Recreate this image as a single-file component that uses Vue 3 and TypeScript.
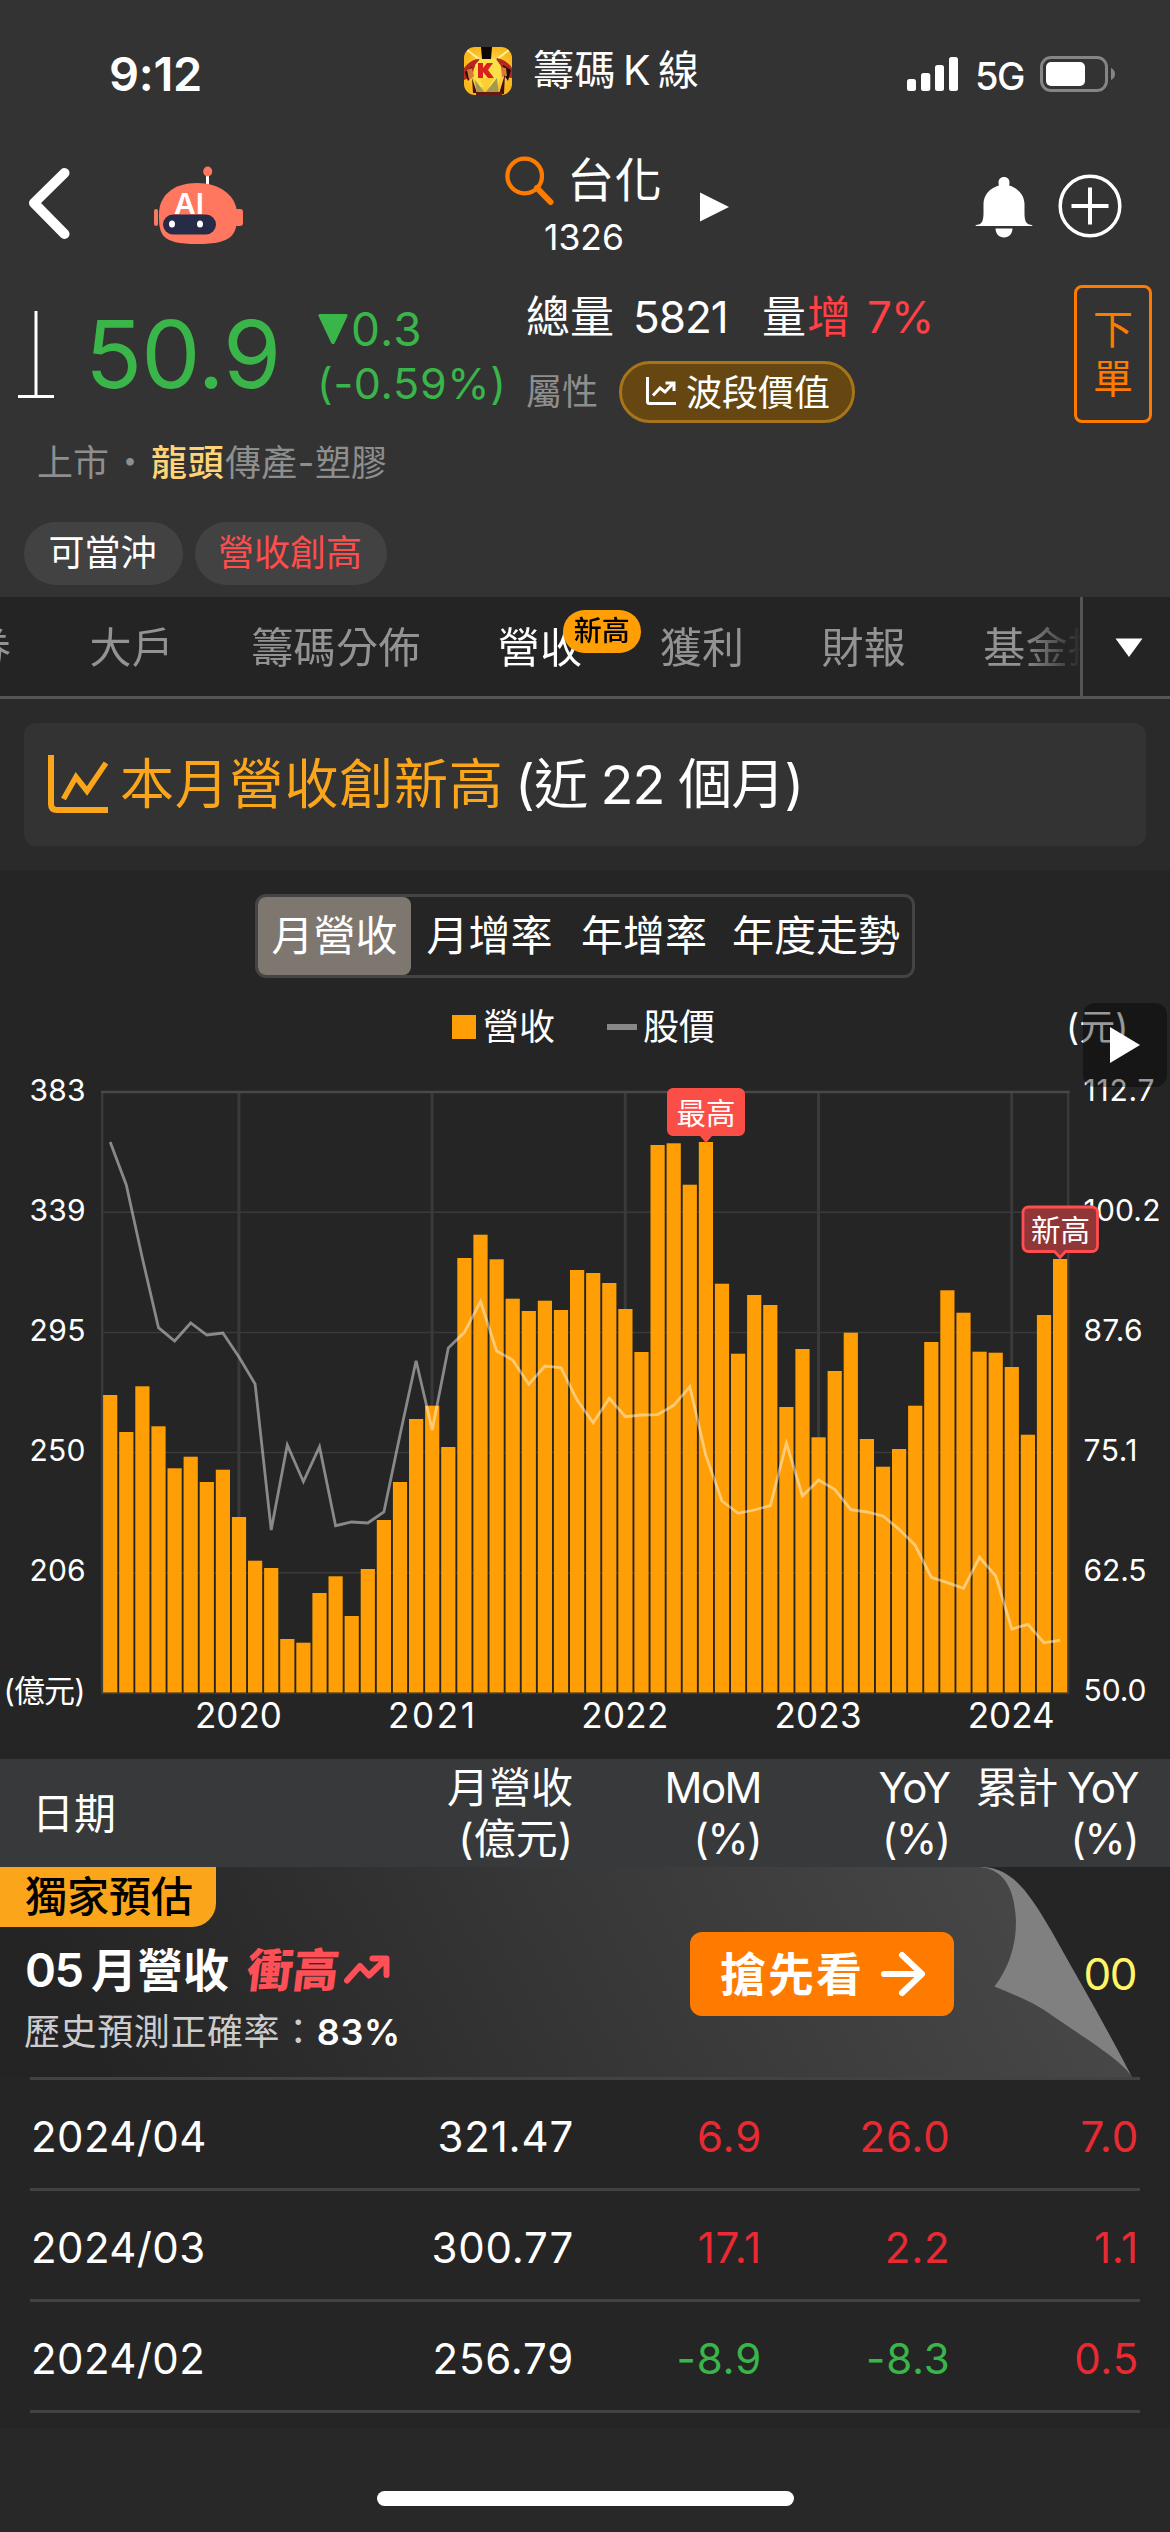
<script setup lang="ts">
interface Tab { label: string; active?: boolean; badge?: string }
interface Row { date: string; revenue: string; mom: string; yoy: string; total: string }

const tabs: Tab[] = [
  { label: '大戶' },
  { label: '籌碼分佈' },
  { label: '營收', active: true, badge: '新高' },
  { label: '獲利' },
  { label: '財報' },
  { label: '基金持股' },
]

const modes = ['月營收', '月增率', '年增率', '年度走勢']

const rows: Row[] = [
  { date: '2024/04', revenue: '321.47', mom: '6.9', yoy: '26.0', total: '7.0' },
  { date: '2024/03', revenue: '300.77', mom: '17.1', yoy: '2.2', total: '1.1' },
  { date: '2024/02', revenue: '256.79', mom: '-8.9', yoy: '-8.3', total: '0.5' },
]

const tone = (v: string): string => (v.startsWith('-') ? 'down' : 'up')

// Chart geometry: bar tops and price points share one vertical scale
const top = 1092
const originY = 1060
const left = 102.2
const pitch = 16.1
const baseline = 1693

const barTops: number[] = [
  1395, 1432, 1386.3, 1426.3, 1468.3, 1456.7, 1482, 1469.7, 1517, 1560.7,
  1568, 1639, 1642.7, 1593, 1576.3, 1616, 1569, 1520, 1482, 1419,
  1405.7, 1447, 1258, 1234.7, 1259.3, 1298.7, 1311, 1300.7, 1310, 1270,
  1273, 1283, 1309, 1352, 1145, 1143.3, 1184.7, 1142, 1283.7, 1353.7,
  1295, 1305, 1407, 1349, 1437.3, 1371, 1332.7, 1439, 1466.7, 1449,
  1405.7, 1342, 1290.3, 1312.7, 1351.7, 1352.7, 1367, 1434.7, 1315, 1259,
]

const prices: number[] = [
  1142, 1185, 1258.3, 1327.7, 1341, 1323, 1335, 1333, 1357, 1384,
  1530, 1445, 1481.7, 1446.7, 1525.7, 1522, 1523, 1512, 1435, 1360.7,
  1430, 1348, 1332.3, 1301.3, 1351, 1360, 1384.3, 1366, 1367.7, 1400,
  1422.7, 1398.3, 1416.7, 1415, 1414.7, 1405.3, 1386.7, 1455.7, 1501, 1513.3,
  1510, 1505.7, 1443.3, 1496, 1480, 1489.3, 1509.7, 1512, 1516, 1529.3,
  1545.3, 1577.3, 1582.7, 1588.3, 1557.3, 1576, 1629, 1624.3, 1642.7, 1640.3,
]

const centerX = (i: number): number => left + 8 + pitch * i
const bars = barTops.map((y, i) => ({ x: centerX(i) - 7.1, y: y - originY, h: baseline - y }))
const line = prices.map((y, i) => `${centerX(i).toFixed(1)},${(y - originY).toFixed(1)}`).join(' ')

const grid = [1, 2, 3, 4].map((n) => top - originY + n * 120.2)
const years = ['2020', '2021', '2022', '2023', '2024'].map((label, i) => ({ label, x: 238.9 + i * 193.2 }))
const leftAxis = ['383', '339', '295', '250', '206'].map((label, i) => ({ label, y: 40.5 + i * 120.1 }))
const rightAxis = [
  { label: '112.7', w: 71 }, { label: '100.2', w: 77 }, { label: '87.6', w: 59 },
  { label: '75.1', w: 54 }, { label: '62.5', w: 63 }, { label: '50.0', w: 63 },
].map((a, i) => ({ ...a, y: 40.5 + i * 120.1 }))
</script>

<template>
  <div class="screen">
    <header class="top">
      <div class="status">
        <span class="clock">9:12</span>
        <svg class="app-icon" width="48" height="48" viewBox="0 0 48 48">
          <defs>
            <clipPath id="appClip"><rect width="48" height="48" rx="11" /></clipPath>
            <radialGradient id="glow"><stop offset="0" stop-color="#fff26a" /><stop offset="1" stop-color="#fbb81c" /></radialGradient>
          </defs>
          <g clip-path="url(#appClip)">
            <rect width="48" height="48" fill="url(#glow)" />
            <path d="M3 3l12 9M45 3l-12 9M24 0v10" stroke="#fff3a0" stroke-width="2" />
            <path d="M0 21c4-5 9-9 15-9l2 3-7 6-2 9-8 3zM48 21c-3-5-9-9-15-10l-2 4 7 6 2 9 8 1z" fill="#b3271d" />
            <path d="M1 25l7-5 1 8-5 6zM47 23l-8-5 1 10 4 6z" fill="#1b0b07" />
            <path d="M3 23l5-2 2 8-5 4zM37 20l5 1 1 8-5 1z" fill="#d97a35" />
            <path d="M16 12h16l5 7-1 13-3 8H15l-5-9 1-13z" fill="#fbe04a" />
            <path d="M17 0h11l-1 12h-9z" fill="#0c0907" />
            <path d="M8 31l5 15h-4zM41 27l-6 20h5z" fill="#3b1020" />
            <path d="M11 33l10 13 12-15 2 17H13z" fill="#a39a4f" />
            <path d="M15 31l7 13 8-13z" fill="#fbce35" />
            <path d="M12 45h26v3H12z" fill="#641a14" />
            <path d="M14 31V16h5v5l4-5h6l-5 7 6 8h-6l-5-6v6z" fill="#d9221e" />
          </g>
        </svg>
        <span class="app-name">籌碼<i>K</i>線</span>
        <svg class="signal" width="52" height="34" viewBox="0 0 52 34">
          <g fill="#fff">
            <rect y="22" width="9" height="12" rx="2.5" />
            <rect x="14" y="16" width="9.3" height="18" rx="2.5" />
            <rect x="28" y="8" width="9" height="26" rx="2.5" />
            <rect x="42" width="9" height="34" rx="2.5" />
          </g>
        </svg>
        <span class="net">5G</span>
        <svg class="battery" width="76" height="36" viewBox="0 0 76 36">
          <rect x="1.5" y="1.5" width="65" height="33" rx="9.5" fill="none" stroke="#858585" stroke-width="3" />
          <rect x="6" y="6" width="39" height="24" rx="5" fill="#fff" />
          <path d="M71 12c2.600 1 4 3.400 4 6s-1.400 5-4 6z" fill="#858585" />
        </svg>
      </div>

      <div class="nav">
        <svg class="back" width="46" height="76" viewBox="0 0 46 76">
          <path d="M36.500 8L6 38l30.500 31" fill="none" stroke="#fff" stroke-width="10" stroke-linecap="round" stroke-linejoin="round" />
        </svg>
        <svg class="robot" width="90" height="80" viewBox="0 0 90 80">
          <rect x="52" y="8" width="3" height="12" fill="#fff" />
          <ellipse cx="53.700" cy="5.500" rx="4.500" ry="5" fill="#ff775e" />
          <rect x="0" y="43" width="4" height="17" rx="2" fill="#ff775e" />
          <rect x="80" y="43" width="9" height="17" rx="3" fill="#ff775e" />
          <path d="M5 48c0-19 15-31 38-31s40 13 40 31c0 20-3 30-40 30S5 68 5 48z" fill="#ff775e" />
          <rect x="9" y="48.500" width="53" height="20" rx="10" fill="#262c48" />
          <ellipse cx="18" cy="58" rx="3" ry="3.600" fill="#fff" />
          <ellipse cx="46" cy="58" rx="3" ry="3.600" fill="#fff" />
          <text x="20" y="47.500" textLength="30" lengthAdjust="spacingAndGlyphs" class="ai">AI</text>
        </svg>
        <div class="stock">
          <div class="stock-name">
            <svg width="50" height="50" viewBox="0 0 50 50">
              <circle cx="19.700" cy="20" r="17.300" fill="none" stroke="#ff7b00" stroke-width="4.300" />
              <path d="M32 32l13.500 14" stroke="#ff7b00" stroke-width="6" stroke-linecap="round" />
            </svg>
            <span>台化</span>
          </div>
          <div class="stock-code">1326</div>
        </div>
        <svg class="next" width="30" height="30" viewBox="0 0 30 30"><path d="M0 0.500l29 14.500L0 29.500z" fill="#fff" /></svg>
        <svg class="bell" width="58" height="62" viewBox="0 0 58 62">
          <path d="M29 0c3.600 0 5.500 2.400 5.500 5.500l-.3 3C43 11 49.500 18 49.500 27v9c0 6 1 9.500 3.500 11 1.600 1 4.500.6 4.500 2H.5c0-1.400 2.900-1 4.500-2 2.500-1.500 3.500-5 3.500-11v-9c0-9 6.500-16 15.300-18.500l-.3-3C23.500 2.400 25.400 0 29 0zM20.500 51.500h17c0 5-3.500 9-8.500 9s-8.500-4-8.500-9z" fill="#fff" />
        </svg>
        <svg class="add" width="64" height="64" viewBox="0 0 64 64">
          <circle cx="32" cy="32" r="29.800" fill="none" stroke="#fff" stroke-width="3.500" />
          <path d="M13.500 32h37M32 13.500v37" stroke="#fff" stroke-width="4" />
        </svg>
      </div>

      <div class="quote">
        <svg class="candle" width="36" height="88" viewBox="0 0 36 88">
          <path d="M18 0v85M0 85.500h36" stroke="#fff" stroke-width="3" />
        </svg>
        <span class="price">50.9</span>
        <div class="change">
          <div class="delta">
            <svg width="30" height="32" viewBox="0 0 30 32"><path d="M2 1h26c1.500 0 1.800 1.200 1.400 2.200L17 29.500c-.8 2-3.200 2-4 0L.6 3.200C.2 2.200.5 1 2 1z" fill="#3ab54a" /></svg>
            <span>0.3</span>
          </div>
          <div class="percent">(-0.59%)</div>
        </div>
        <div class="meta">
          <div class="volume"><span>總量</span><span class="vol">5821</span><span class="qty">量</span><span class="hot">增</span><span class="hot pct">7%</span></div>
          <div class="kind">
            <span class="kind-label">屬性</span>
            <span class="pill">
              <svg width="32" height="32" viewBox="0 0 32 32">
                <path d="M2.500 1v24.500a2 2 0 0 0 2 2H31" fill="none" stroke="#fff" stroke-width="3" />
                <path d="M8 19.500l7-7.500 5 4 8-8.500M20.500 7h8.500v8" fill="none" stroke="#fff" stroke-width="3" />
              </svg>
              <span>波段價值</span>
            </span>
          </div>
        </div>
        <button class="order"><span>下</span><span>單</span></button>
      </div>

      <div class="sector"><span>上市</span><span class="dot">・</span><b>龍頭</b><span>傳產</span><span class="dash">-</span><span>塑膠</span></div>
      <div class="chips"><span class="chip">可當沖</span><span class="chip chip-hot">營收創高</span></div>
    </header>

    <nav class="tabs">
      <div class="tab-strip">
        <span class="tab tab-cut">券</span>
        <span v-for="t in tabs" :key="t.label" class="tab" :class="{ active: t.active }">
          {{ t.label }}<em v-if="t.badge">{{ t.badge }}</em>
        </span>
      </div>
      <div class="tab-more"><svg width="28" height="20" viewBox="0 0 28 20"><path d="M.5 0.500h27L14 19z" fill="#fff" /></svg></div>
    </nav>

    <section class="notice">
      <div class="notice-card">
        <svg width="62" height="60" viewBox="0 0 62 60">
          <path d="M3 0v49q0 6 6 6h51" fill="none" stroke="#fba61a" stroke-width="6" />
          <path d="M15.500 44l12.500-22 11 14L58 8" fill="none" stroke="#fba61a" stroke-width="5.500" />
        </svg>
        <span class="notice-main">本月營收創新高</span>
        <span class="notice-sub">(近 22 個月)</span>
      </div>
    </section>

    <section class="chart">
      <div class="modes">
        <span v-for="(m, i) in modes" :key="m" class="mode" :class="[`mode-${i}`, { on: i === 0 }]">{{ m }}</span>
      </div>
      <div class="legend">
        <i class="swatch"></i><span>營收</span>
        <i class="stroke"></i><span>股價</span>
        <span class="unit">(元)</span>
      </div>
      <svg class="plot" width="1170" height="699" viewBox="0 0 1170 699">
        <g stroke="#3a3a3a" fill="none">
          <path v-for="y in grid" :key="y" :d="`M102 ${y}H1068`" stroke-width="1.500" />
          <path v-for="y in years" :key="y.label" :d="`M${y.x} 32V633`" stroke-width="3" />
          <path d="M102.200 633V32M1068.200 32V633" stroke-width="2.500" />
          <path d="M101 633.500H1069.500" stroke-width="1.500" />
          <path d="M101 32H1069.500" stroke="#484848" stroke-width="2.500" />
        </g>
        <g fill="#ff9f05">
          <rect v-for="(b, i) in bars" :key="i" :x="b.x" :y="b.y" width="14.200" :height="b.h - 0.500" />
        </g>
        <polyline :points="line" fill="none" stroke="#fff" stroke-opacity=".46" stroke-width="2.800" />
        <g class="axis">
          <text v-for="a in leftAxis" :key="a.label" x="29.500" :y="a.y" textLength="56">{{ a.label }}</text>
          <text x="3.500" y="642" textLength="82" class="small">(億元)</text>
          <text v-for="a in rightAxis" :key="a.label" x="1083.500" :y="a.y" :textLength="a.w">{{ a.label }}</text>
        </g>
        <g class="year-axis">
          <text v-for="y in years" :key="y.label" :x="y.x - 44" y="667.500" textLength="87">{{ y.label }}</text>
        </g>
        <path d="M673 28h66a6 6 0 0 1 6 6v36a6 6 0 0 1-6 6h-27l-6 7-6-7h-27a6 6 0 0 1-6-6V34a6 6 0 0 1 6-6z" fill="#fb4e46" />
        <text x="676.500" y="63.500" class="flag">最高</text>
        <path d="M1028.500 147h63.500a5.500 5.500 0 0 1 5.500 5.500v33.500a5.500 5.500 0 0 1-5.500 5.500h-26.500l-5.500 6-5.500-6h-26a5.500 5.500 0 0 1-5.500-5.500v-33.500a5.500 5.500 0 0 1 5.500-5.500z" fill="#913637" stroke="#ff4d50" stroke-width="2.800" />
        <text x="1031" y="181" class="flag">新高</text>
      </svg>
      <div class="play"><svg width="30" height="36" viewBox="0 0 30 36"><path d="M0 0l30 18L0 36z" fill="#fff" /></svg></div>
    </section>

    <section class="table">
      <div class="tr head">
        <span class="c1">日期</span>
        <span class="c2">月營收<br />(億元)</span>
        <span class="c3">MoM<br />(%)</span>
        <span class="c4">YoY<br />(%)</span>
        <span class="c5">累計 YoY<br />(%)</span>
      </div>

      <div class="promo">
        <svg class="curl" width="1170" height="210" viewBox="0 0 1170 210">
          <defs>
            <linearGradient id="sheet" x1="0" y1="0.100" x2="1" y2="0">
              <stop offset="0" stop-color="#242424" /><stop offset=".5" stop-color="#383838" /><stop offset="1" stop-color="#4b4b4b" />
            </linearGradient>
          </defs>
          <text x="1083.500" y="123" textLength="54" class="zeros">00</text>
          <path d="M0 0H979C1008 1 1016 28 1016 55C1040 90 1080 150 1132 210H0z" fill="url(#sheet)" />
          <path d="M979 0C1010 -1 1027 22 1052 65C1080 115 1105 158 1132 210C1120 192 1086 172 1050 147C1033 135 1015 128 994.500 119.500C1008 102 1016 80 1016 55C1015 28 1008 2 979 0z" fill="#808080" />
        </svg>
        <div class="promo-text">
          <span class="ribbon">獨家預估</span>
          <div class="forecast">
            <span class="mm">05</span><span>月營收</span><em>衝高</em>
            <svg width="48" height="32" viewBox="0 0 48 32">
              <path d="M4 26.500l13-14.500 9 9.500L42 6M29.500 4.500H43.500v16.500" fill="none" stroke="#ff5058" stroke-width="6" stroke-linecap="round" stroke-linejoin="round" />
            </svg>
          </div>
          <div class="accuracy">歷史預測正確率<span class="colon">：</span><b>83%</b></div>
        </div>
        <button class="cta">
          <span>搶先看</span>
          <svg width="46" height="46" viewBox="0 0 46 46"><path d="M4 23h37M22 4l20 19-20 19" fill="none" stroke="#fff" stroke-width="6" stroke-linecap="round" stroke-linejoin="round" /></svg>
        </button>
      </div>

      <div class="body">
        <div v-for="r in rows" :key="r.date" class="tr row">
          <span class="c1">{{ r.date }}</span>
          <span class="c2">{{ r.revenue }}</span>
          <span class="c3" :class="tone(r.mom)">{{ r.mom }}</span>
          <span class="c4" :class="tone(r.yoy)">{{ r.yoy }}</span>
          <span class="c5" :class="tone(r.total)">{{ r.total }}</span>
        </div>
      </div>
    </section>

    <footer class="home"><i></i></footer>
  </div>
</template>

<style>
body { background: #252525; }
</style>

<style scoped>
.screen {
  width: 1170px;
  height: 2532px;
  overflow: hidden;
  display: flex;
  flex-direction: column;
  background: #252525;
  color: #fff;
  font-family: Inter, "Noto Sans CJK TC", sans-serif;
  white-space: nowrap;
}
svg { display: block; flex: none; }
i { font-style: normal; }
span { flex: none; }
button { font: inherit; background: none; margin: 0; padding: 0; }

.top { height: 597px; background: #333; }
.status { display: flex; height: 142px; align-items: flex-start; }
.clock { margin: 46px 0 0 109px; width: 95px; line-height: 56px; font-size: 47px; font-weight: 600; letter-spacing: -0.3px; }
.app-icon { margin: 47px 0 0 260px; }
.app-name { margin: 42px 0 0 21px; width: 374px; line-height: 56px; font-size: 41px; letter-spacing: 0.5px; }
.app-name i { margin: 0 7px; }
.signal { margin-top: 57px; }
.net { margin: 48px 0 0 16px; width: 65px; line-height: 56px; font-size: 38px; font-weight: 500; letter-spacing: -1.5px; }
.battery { margin-top: 56px; }

.nav { display: flex; height: 138px; align-items: flex-start; }
.back { margin: 23px 0 0 28px; }
.robot { margin: 24px 0 0 80px; }
.ai { font-size: 28px; font-weight: 600; fill: #fff; }
.stock { margin-left: 261px; width: 160px; }
.stock-name { display: flex; align-items: center; height: 76px; }
.stock-name span { margin-left: 12px; font-size: 47px; line-height: 60px; letter-spacing: 0.7px; }
.stock-name svg { margin-top: 2px; }
.stock-code { margin-left: 39px; line-height: 40px; font-size: 35.5px; }
.next { margin: 50px 0 0 35px; }
.bell { margin: 35px 0 0 245px; }
.add { margin: 32px 0 0 25px; }

.quote { display: flex; height: 152px; align-items: flex-start; }
.candle { margin: 31px 0 0 18px; }
.price { margin: 14px 0 0 31px; width: 232px; font-size: 94px; line-height: 120px; color: #3ab54a; letter-spacing: -0.8px; }
.change { width: 209px; padding-top: 23px; color: #3ab54a; }
.delta { display: flex; align-items: center; height: 52px; font-size: 46px; line-height: 52px; margin-left: 1px; letter-spacing: 1.2px; }
.delta span { margin-left: 3px; }
.percent { font-size: 43px; line-height: 56px; letter-spacing: 0.7px; }
.meta { width: 548px; }
.volume { display: flex; padding-top: 10px; font-size: 44px; line-height: 54px; }
.vol { margin-left: 19px; width: 129px; letter-spacing: -1px; }
.qty { width: 45px; }
.hot { color: #ff4147; }
.pct { margin-left: 16px; letter-spacing: -1px; }
.kind { display: flex; align-items: center; height: 62px; margin-top: 17px; }
.kind-label { width: 93px; font-size: 36px; color: #8e8e8e; line-height: 60px; }
.pill { display: flex; box-sizing: border-box; width: 236px; height: 62px; align-items: center; padding-left: 23px; border: 3px solid #a8741a; border-radius: 31px; background: #664712; font-size: 36px; line-height: 56px; }
.pill span { margin: 2px 0 0 9px; }
.order { display: flex; flex-direction: column; justify-content: center; align-items: center; box-sizing: border-box; width: 78px; height: 138px; margin-top: 5px; border: 3px solid #ff7b00; border-radius: 8px; color: #ff7b00; font-size: 40px; line-height: 49px; }

.sector { display: flex; box-sizing: border-box; height: 90px; align-items: flex-start; padding: 5px 0 0 37px; font-size: 36px; line-height: 52px; color: #8e8e8e; }
.sector b { font-weight: 500; color: #ffd479; width: 74px; letter-spacing: 0.7px; }
.dot { width: 42px; text-align: center; }
.dash { width: 18px; text-align: center; }
.chips { display: flex; gap: 12px; padding-left: 24px; }
.chip { box-sizing: border-box; width: 159px; height: 63px; padding-right: 2px; border-radius: 32px; background: #424242; text-align: center; font-size: 36px; line-height: 63px; }
.chip-hot { width: 192px; color: #ff4d4d; }

.tabs { display: flex; height: 99px; border-bottom: 3px solid #555; background: #242424; }
.tab-strip { display: flex; width: 1080px; overflow: hidden; -webkit-mask-image: linear-gradient(90deg, #000 1020px, transparent 1084px); mask-image: linear-gradient(90deg, #000 1020px, transparent 1084px); }
.tab { position: relative; margin-right: 77px; font-size: 42px; line-height: 101px; color: #939393; letter-spacing: 0.4px; }
.tab-cut { margin-left: -31px; margin-right: 78px; }
.active { color: #fff; }
.tab em { position: absolute; left: 65px; top: 13px; width: 78px; height: 43px; border-radius: 22px; background: #ff9f05; color: #000; font-style: normal; font-size: 28px; font-weight: 500; line-height: 43px; text-align: center; letter-spacing: 0; }
.tab-more { box-sizing: border-box; width: 90px; border-left: 3px solid #555; padding: 41px 0 0 32px; }

.notice { display: flex; height: 171px; align-items: flex-start; background: #2a2a2a; }
.notice-card { display: flex; box-sizing: border-box; width: 1122px; height: 123px; margin: 24px 24px 0; padding-left: 24px; align-items: center; border-radius: 12px; background: #333; font-size: 54px; line-height: 80px; }
.notice-main { margin-left: 10px; width: 395px; color: #fba61a; letter-spacing: 0.8px; }
.notice-sub { letter-spacing: -0.8px; word-spacing: -1px; }

.chart { position: relative; height: 889px; background: #252525; }
.modes { display: flex; box-sizing: border-box; width: 660px; height: 84px; position: relative; margin-left: 255px; top: 24px; border: 3px solid #444; border-radius: 11px; font-size: 42px; line-height: 78px; }
.mode { text-align: center; }
.mode-0 { width: 153px; }
.mode-1 { width: 157px; }
.mode-2 { width: 152px; }
.mode-3 { width: 192px; }
.mode.on { background: #7d776f; border-radius: 8px; }
.legend { display: flex; height: 60px; margin-top: 43px; padding-left: 452px; align-items: center; font-size: 36px; line-height: 60px; }
.swatch { width: 24px; height: 24px; background: #ff9f05; margin-right: 7px; }
.stroke { width: 30px; height: 6px; background: #888; margin: 0 6px 0 52px; }
.unit { margin-left: 351px; }
.plot { position: absolute; left: 0; top: 190px; }
.axis { font-size: 30px; fill: #fff; }
.axis .small { font-size: 31px; }
.year-axis { font-size: 35px; fill: #fff; }
.flag { font-size: 29.500px; fill: #fff; }
.play { position: absolute; box-sizing: border-box; right: 3px; top: 133px; width: 84px; height: 84px; padding: 24px 0 0 27px; border-radius: 12px; background: rgba(0, 0, 0, 0.4); }

.tr { display: flex; text-align: right; font-size: 42px; }
.c1 { width: 200px; margin-left: 32px; text-align: left; }
.c2 { width: 341px; }
.c3 { width: 188px; }
.c4 { width: 188.500px; }
.c5 { width: 188.500px; }
.head { height: 108px; align-items: center; background: #38393b; line-height: 51px; }
.head .c3, .head .c4, .head .c5 { letter-spacing: -1.5px; }
.promo { position: relative; display: flex; height: 210px; }
.curl { position: absolute; left: 0; top: 0; }
.zeros { font-size: 44px; fill: #fff566; }
.promo-text { position: relative; width: 690px; }
.ribbon { display: block; box-sizing: border-box; width: 216px; height: 60px; padding-left: 25px; border-bottom-right-radius: 24px; background: #fba61a; color: #000; font-size: 42px; font-weight: 500; line-height: 60px; }
.forecast { display: flex; align-items: center; height: 60px; margin-top: 13px; padding-left: 25px; font-size: 46px; font-weight: 700; line-height: 60px; }
.mm { width: 66px; font-size: 47px; font-weight: 600; letter-spacing: -1.500px; }
.forecast em { margin: 0 4px 0 18px; color: #ff5058; font-style: normal; font-weight: 900; transform: skewX(-7deg); }
.accuracy { padding-left: 24px; margin-top: 7px; font-size: 36px; line-height: 50px; letter-spacing: 0.6px; color: #ccc; }
.accuracy b { color: #fff; font-weight: 600; }
.cta { position: relative; display: flex; align-items: center; width: 264px; height: 84px; margin-top: 65px; padding-left: 30px; border: 0; border-radius: 12px; background: #ff7b00; color: #fff; font-size: 46px; font-weight: 700; line-height: 84px; }
.cta span { letter-spacing: 2px; margin-right: 16px; }
.body { margin: 0 30px; border-top: 3px solid #424242; }
.row { height: 108px; border-bottom: 3px solid #424242; line-height: 113px; letter-spacing: 0.8px; }
.row .c1 { margin-left: 1px; width: 201px; letter-spacing: 0.4px; }
.row .c2 { width: 342px; }
.up { color: #ea2a33; }
.down { color: #3ab54a; }
.home { margin-top: auto; height: 104px; display: flex; justify-content: center; align-items: flex-start; background: #282828; }
.home i { width: 417px; height: 15px; margin-top: 63px; border-radius: 8px; background: #fff; }
</style>
